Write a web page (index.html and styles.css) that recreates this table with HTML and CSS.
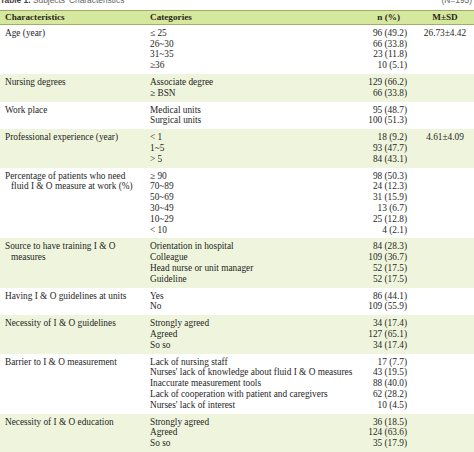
FILE: index.html
```html
<!DOCTYPE html>
<html>
<head>
<meta charset="utf-8">
<link rel="stylesheet" href="styles.css">
</head>
<body>
<div class="title">
  <div class="title-inner">
    <span><b>Table 1.</b> Subjects' Characteristics</span>
    <span>(N=195)</span>
  </div>
</div>
<table class="tbl">
  <thead>
    <tr>
      <th class="c1">Characteristics</th>
      <th class="c2">Categories</th>
      <th class="c3">n (%)</th>
      <th class="c4">M±SD</th>
    </tr>
  </thead>
  <tbody>
    <tr>
      <td class="c1">Age (year)</td>
      <td class="c2">≤ 25<br>26~30<br>31~35<br>≥36</td>
      <td class="c3">96 (49.2)<br>66 (33.8)<br>23 (11.8)<br>10 (5.1)</td>
      <td class="c4">26.73±4.42</td>
    </tr>
    <tr class="g">
      <td class="c1">Nursing degrees</td>
      <td class="c2">Associate degree<br>≥ BSN</td>
      <td class="c3">129 (66.2)<br>66 (33.8)</td>
      <td class="c4"></td>
    </tr>
    <tr>
      <td class="c1">Work place</td>
      <td class="c2">Medical units<br>Surgical units</td>
      <td class="c3">95 (48.7)<br>100 (51.3)</td>
      <td class="c4"></td>
    </tr>
    <tr class="g">
      <td class="c1">Professional experience (year)</td>
      <td class="c2">&lt; 1<br>1~5<br>&gt; 5</td>
      <td class="c3">18 (9.2)<br>93 (47.7)<br>84 (43.1)</td>
      <td class="c4">4.61±4.09</td>
    </tr>
    <tr>
      <td class="c1">Percentage of patients who need<br><span class="ind">fluid I &amp; O measure at work (%)</span></td>
      <td class="c2">≥ 90<br>70~89<br>50~69<br>30~49<br>10~29<br>&lt; 10</td>
      <td class="c3">98 (50.3)<br>24 (12.3)<br>31 (15.9)<br>13 (6.7)<br>25 (12.8)<br>4 (2.1)</td>
      <td class="c4"></td>
    </tr>
    <tr class="g">
      <td class="c1">Source to have training I &amp; O<br><span class="ind">measures</span></td>
      <td class="c2">Orientation in hospital<br>Colleague<br>Head nurse or unit manager<br>Guideline</td>
      <td class="c3">84 (28.3)<br>109 (36.7)<br>52 (17.5)<br>52 (17.5)</td>
      <td class="c4"></td>
    </tr>
    <tr>
      <td class="c1">Having I &amp; O guidelines at units</td>
      <td class="c2">Yes<br>No</td>
      <td class="c3">86 (44.1)<br>109 (55.9)</td>
      <td class="c4"></td>
    </tr>
    <tr class="g">
      <td class="c1">Necessity of I &amp; O guidelines</td>
      <td class="c2">Strongly agreed<br>Agreed<br>So so</td>
      <td class="c3">34 (17.4)<br>127 (65.1)<br>34 (17.4)</td>
      <td class="c4"></td>
    </tr>
    <tr>
      <td class="c1">Barrier to I &amp; O measurement</td>
      <td class="c2">Lack of nursing staff<br>Nurses' lack of knowledge about fluid I &amp; O measures<br>Inaccurate measurement tools<br>Lack of cooperation with patient and caregivers<br>Nurses' lack of interest</td>
      <td class="c3">17 (7.7)<br>43 (19.5)<br>88 (40.0)<br>62 (28.2)<br>10 (4.5)</td>
      <td class="c4"></td>
    </tr>
    <tr class="g last">
      <td class="c1">Necessity of I &amp; O education</td>
      <td class="c2">Strongly agreed<br>Agreed<br>So so</td>
      <td class="c3">36 (18.5)<br>124 (63.6)<br>35 (17.9)</td>
      <td class="c4"></td>
    </tr>
  </tbody>
</table>
</body>
</html>
```
FILE: styles.css
```css
html, body {
  margin: 0;
  padding: 0;
  background: #ffffff;
}
body {
  width: 474px;
  height: 452px;
  overflow: hidden;
}
.title {
  height: 10px;
  overflow: hidden;
}
.title-inner {
  margin-top: -5px;
  display: flex;
  justify-content: space-between;
  font-family: "Liberation Sans", Arial, sans-serif;
  font-size: 8.4px;
  line-height: 10px;
  color: #666;
  padding-right: 2px;
}
.title-inner b {
  color: #444;
}
.tbl {
  width: 474px;
  border-collapse: collapse;
  table-layout: fixed;
  font-family: "Liberation Serif", "Times New Roman", serif;
  font-size: 9.3px;
  line-height: 10.8px;
  color: #262626;
}
.tbl th {
  background: #d6e89e;
  border-top: 1px solid #9fae6a;
  border-bottom: 1px solid #9fae6a;
  font-weight: bold;
  font-size: 9.2px;
  padding: 1px 0 1px 0;
  height: 10px;
  color: #2a2a1a;
}
.tbl td {
  vertical-align: top;
  padding: 3px 0 3px 0;
  white-space: nowrap;
}
.tbl tr.g td {
  background: #eff5dc;
}
.tbl tr.last td {
  border-bottom: 2px solid #cfdfa6;
}
.c1 {
  width: 145px;
  padding-left: 5px !important;
  text-align: left;
}
.c2 {
  width: 200px;
  text-align: left;
}
.c3 {
  width: 57px;
  padding-right: 9px !important;
  text-align: right;
}
th.c3 {
  width: 50px;
  text-align: right;
  padding-right: 16px !important;
}
.c4 {
  width: 58px;
  text-align: center;
  padding-right: 0;
}
.ind {
  padding-left: 6px;
}
```
